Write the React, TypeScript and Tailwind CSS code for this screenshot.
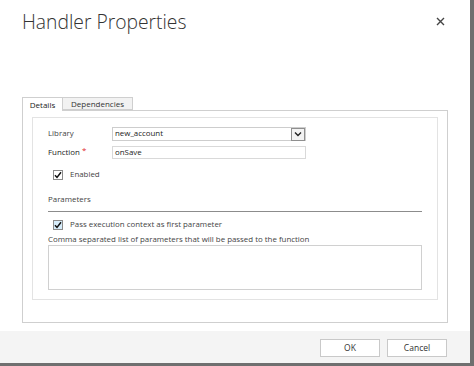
import React from 'react'

const font = { fontFamily: '"Open Sans", "Noto Sans", sans-serif' }

function Check({ hl }: { hl?: boolean }) {
  return (
    <span className={`flex h-[10px] w-[10px] items-center justify-center border border-[#8a8a8a] ${hl ? 'bg-[#d6ecfa]' : 'bg-white'}`}>
      <svg width="8" height="8" viewBox="0 0 8 8">
        <path d="M1 4.2 L3 6.4 L7 1.2" fill="none" stroke="#111" strokeWidth="1.5" />
      </svg>
    </span>
  )
}

export default function App() {
  return (
    <div style={font} className="flex h-[366px] w-[474px] flex-col overflow-hidden border-r-4 border-b-[3px] border-[#6f6f6f] bg-white text-[#444]">
      {/* Header */}
      <div className="flex h-[96px] items-start justify-between pl-[22px] pr-[25px] pt-[8px]">
        <h1 className="text-[19.3px] font-light leading-[28px] text-[#333]">Handler Properties</h1>
        <svg className="mt-[9px]" width="9" height="9" viewBox="0 0 9 9">
          <path d="M1 1 L8 8 M8 1 L1 8" stroke="#444" strokeWidth="1.4" />
        </svg>
      </div>

      {/* Tabs */}
      <div className="mx-[22px] flex h-[14px] items-end text-[8px]">
        <div className="relative -mb-px flex h-[14px] w-[41px] items-center justify-center border border-b-0 border-[#cfcfcf] bg-white text-[#222]">Details</div>
        <div className="flex h-[13px] w-[70px] items-center justify-center border border-l-0 border-[#cfcfcf] bg-[#f2f2f2] text-[#333]">Dependencies</div>
      </div>

      {/* Panel */}
      <div className="mx-[22px] h-[213px] border border-[#cfcfcf] px-[9px] pt-[6px]">
        <div className="flex h-[183px] flex-col border border-[#e3e3e3] px-[15px] pt-[9px] text-[7.9px]">
          <div className="flex h-[14px] items-center">
            <span className="w-[64px] text-[#444]">Library</span>
            <div className="flex h-[14px] w-[194px] items-center justify-between border border-[#cdcdcd] pl-[2px]">
              <span className="text-[#222]">new_account</span>
              <span className="flex h-[13px] w-[14px] items-center justify-center border border-[#8f8f8f] bg-[#f3f3f3]">
                <svg width="8" height="6" viewBox="0 0 8 6">
                  <path d="M1 1.5 L4 4.5 L7 1.5" fill="none" stroke="#222" strokeWidth="1.4" />
                </svg>
              </span>
            </div>
          </div>
          <div className="mt-[5px] flex h-[13px] items-center">
            <span className="w-[64px] text-[#222]">
              Function <span className="relative -top-[2px] text-[#e0262b]">*</span>
            </span>
            <div className="flex h-[13px] w-[194px] items-center border border-[#d9d9d9] pl-[2px] text-[#222]">onSave</div>
          </div>
          <div className="mt-[10px] flex items-center gap-[7px] pl-[5px]">
            <Check />
            <span>Enabled</span>
          </div>
          <div className="mt-[13px] text-[#444]">Parameters</div>
          <div className="mt-[5px] h-px w-full bg-[#8c8c8c]" />
          <div className="mt-[7px] flex items-center gap-[7px] pl-[5px]">
            <Check hl />
            <span>Pass execution context as first parameter</span>
          </div>
          <div className="mt-[3px]">Comma separated list of parameters that will be passed to the function</div>
          <div className="h-[45px] w-full border border-[#d0d0d0] bg-white" />
        </div>
      </div>

      {/* Footer */}
      <div className="mt-[8px] flex flex-1 items-start justify-end gap-[7px] bg-[#f4f4f4] pr-[23px] pt-[8px] text-[8.5px] text-[#333]">
        <button className="h-[18px] w-[60px] border border-[#c9c9c9] bg-white">OK</button>
        <button className="h-[18px] w-[60px] border border-[#c9c9c9] bg-white">Cancel</button>
      </div>
    </div>
  )
}
